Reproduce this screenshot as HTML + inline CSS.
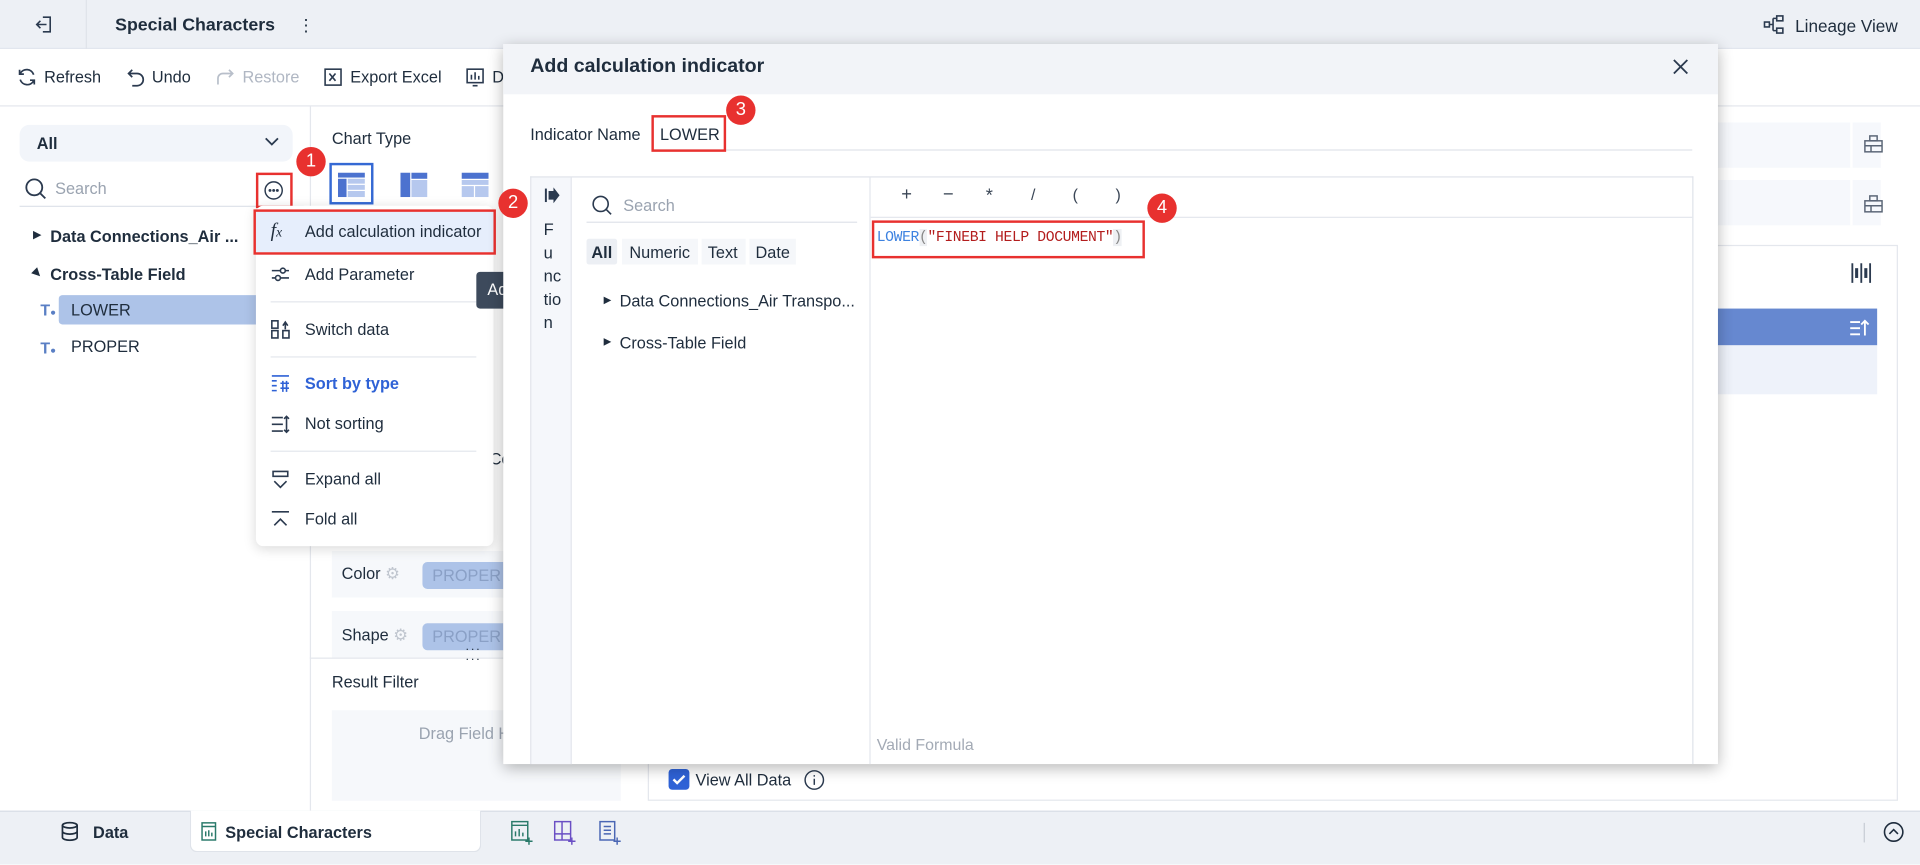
<!DOCTYPE html>
<html><head><meta charset="utf-8"><style>
*{box-sizing:border-box;margin:0;padding:0}
html,body{width:1920px;height:865px;overflow:hidden;background:#fff}
#s{position:absolute;left:0;top:0;width:1568px;height:706px;transform:scale(1.22449);transform-origin:0 0;font-family:"Liberation Sans",Arial,sans-serif;font-size:13.3px;color:#1f2d3d}
.a{position:absolute;white-space:nowrap}
.b{font-weight:bold}
.badge{position:absolute;width:24px;height:24px;border-radius:50%;background:#e8312f;color:#fff;font-size:15px;text-align:center;line-height:24px}
.red{position:absolute;border:2px solid #e8312f}
.t{transform:translateY(-50%)}
svg{position:absolute}
</style></head><body><div id="s">
<!-- top bar -->
<div class="a" style="left:0;top:0;width:1568px;height:40px;background:#edf0f5;border-bottom:1px solid #e2e6ee"></div>
<div class="a" style="left:70px;top:0;width:1px;height:40px;background:#dfe3ea"></div>
<svg style="left:28px;top:12px" width="16" height="16" viewBox="0 0 16 16" fill="none" stroke="#2b3a4f" stroke-width="1.3"><path d="M7 2h6v12H7M10 8H2M5 5L2 8l3 3"/></svg>
<div class="a b t" style="left:94px;top:21px;font-size:14.5px">Special Characters</div>
<div class="a t" style="left:243px;top:21px;font-size:14px">⋮</div>
<svg style="left:1440px;top:12px" width="18" height="16" viewBox="0 0 18 16" fill="none" stroke="#2b3a4f" stroke-width="1.3"><rect x="1" y="6" width="4" height="4"/><rect x="11" y="1" width="5" height="4"/><rect x="11" y="11" width="5" height="4"/><path d="M5 8h3M8 3v10M8 3h3M8 13h3"/></svg>
<div class="a t" style="left:1466px;top:21px;font-size:14px">Lineage View</div>
<!-- toolbar -->
<div class="a" style="left:0;top:86px;width:1568px;height:1px;background:#e4e7ed"></div>
<svg style="left:14px;top:55px" width="16" height="16" viewBox="0 0 16 16" fill="none" stroke="#2b3a4f" stroke-width="1.4"><path d="M13.5 6A6 6 0 0 0 2.5 5M2.5 10a6 6 0 0 0 11 1M2 2v3.5h3.5M14 14v-3.5h-3.5"/></svg>
<div class="a t" style="left:36px;top:63px">Refresh</div>
<svg style="left:103px;top:55px" width="16" height="16" viewBox="0 0 16 16" fill="none" stroke="#2b3a4f" stroke-width="1.4"><path d="M5 2L2 5l3 3M2 5h7a5 5 0 0 1 0 10H5"/></svg>
<div class="a t" style="left:124px;top:63px">Undo</div>
<svg style="left:176px;top:55px" width="16" height="16" viewBox="0 0 16 16" fill="none" stroke="#b8bfca" stroke-width="1.4"><path d="M11 2l3 3-3 3M14 5H6a4 4 0 0 0-4 4v5"/></svg>
<div class="a t" style="left:198px;top:63px;color:#b0b7c3">Restore</div>
<svg style="left:264px;top:55px" width="16" height="16" viewBox="0 0 16 16" fill="none" stroke="#2b3a4f" stroke-width="1.3"><rect x="1.5" y="1.5" width="13" height="13"/><path d="M5 5l5 6M10 5l-5 6"/></svg>
<div class="a t" style="left:286px;top:63px">Export Excel</div>
<svg style="left:380px;top:55px" width="16" height="16" viewBox="0 0 16 16" fill="none" stroke="#2b3a4f" stroke-width="1.3"><rect x="1.5" y="1.5" width="13" height="11"/><path d="M5 10V6M8 10V4M11 10V7M6 15h4"/></svg>
<div class="a t" style="left:402px;top:63px">D</div>
<!-- left panel -->
<div class="a" style="left:253px;top:87px;width:1px;height:575px;background:#e4e7ed"></div>
<div class="a" style="left:16px;top:102px;width:223px;height:30px;background:#f2f5fa;border-radius:8px"></div>
<div class="a b t" style="left:30px;top:117px">All</div>
<svg style="left:215px;top:111px" width="14" height="10" viewBox="0 0 14 10" fill="none" stroke="#2b3a4f" stroke-width="1.5"><path d="M2 2l5 5 5-5"/></svg>
<svg style="left:20px;top:145px" width="18" height="18" viewBox="0 0 18 18" fill="none" stroke="#2b3a4f" stroke-width="1.5"><circle cx="8" cy="8" r="6.5"/><path d="M13 13l4 4"/></svg>
<div class="a t" style="left:45px;top:154px;color:#9aa3b0">Search</div>
<div class="a" style="left:16px;top:168px;width:232px;height:1px;background:#dfe3ea"></div>
<svg style="left:215px;top:147px" width="17" height="17" viewBox="0 0 17 17" fill="none" stroke="#2b3a4f" stroke-width="1.2"><circle cx="8.5" cy="8.5" r="7"/><circle cx="5.5" cy="8.5" r=".6" fill="#2b3a4f"/><circle cx="8.5" cy="8.5" r=".6" fill="#2b3a4f"/><circle cx="11.5" cy="8.5" r=".6" fill="#2b3a4f"/></svg>
<div class="red" style="left:209px;top:141px;width:30px;height:29px"></div>
<div class="badge" style="left:242px;top:120px">1</div>
<div class="a t" style="left:27px;top:192px;font-size:9px">▶</div>
<div class="a b t" style="left:41px;top:193px">Data Connections_Air ...</div>
<div class="a t" style="left:27px;top:223px;font-size:9px;transform:translateY(-50%) rotate(45deg)">▶</div>
<div class="a b t" style="left:41px;top:224px">Cross-Table Field</div>
<div class="a" style="left:48px;top:241px;width:205px;height:24px;background:#adc3e8;border-radius:3px"></div>
<div class="a t" style="left:33px;top:253px;color:#5a7fc4;font-weight:bold;font-size:13px">T<span style="font-size:8px">●</span></div>
<div class="a t" style="left:58px;top:253px">LOWER</div>
<div class="a t" style="left:33px;top:284px;color:#5a7fc4;font-weight:bold;font-size:13px">T<span style="font-size:8px">●</span></div>
<div class="a t" style="left:58px;top:283px">PROPER</div>
<!-- chart type column -->
<div class="a t" style="left:271px;top:113px">Chart Type</div>
<div class="a" style="left:269px;top:133px;width:36px;height:34px;border:2px solid #3569d4"></div>
<svg style="left:276px;top:141px" width="22" height="20" viewBox="0 0 22 20"><rect x="0" y="0" width="22" height="4" fill="#4c72cf"/><rect x="0" y="5" width="7" height="15" fill="#4c72cf"/><rect x="8" y="5" width="14" height="4" fill="#b6c8ee"/><rect x="8" y="10" width="14" height="4" fill="#b6c8ee"/><rect x="8" y="15" width="14" height="5" fill="#b6c8ee"/></svg>
<svg style="left:327px;top:141px" width="22" height="20" viewBox="0 0 22 20"><rect x="0" y="0" width="8" height="20" fill="#4c72cf"/><rect x="9" y="0" width="13" height="5" fill="#4c72cf"/><rect x="9" y="6" width="13" height="14" fill="#b6c8ee"/></svg>
<svg style="left:377px;top:141px" width="22" height="20" viewBox="0 0 22 20"><rect x="0" y="0" width="22" height="5" fill="#4c72cf"/><rect x="0" y="6" width="22" height="4" fill="#b6c8ee"/><rect x="0" y="11" width="10" height="9" fill="#b6c8ee"/><rect x="11" y="11" width="11" height="9" fill="#b6c8ee"/></svg>
<div class="a t" style="left:400px;top:375px">Co</div>
<div class="a" style="left:271px;top:450px;width:140px;height:38px;background:#f6f8fb"></div>
<div class="a t" style="left:279px;top:469px">Color <span style="color:#c0c6cf">⚙</span></div>
<div class="a" style="left:345px;top:459px;width:66px;height:22px;background:#adc3e8;border-radius:4px 0 0 4px"></div>
<div class="a t" style="left:353px;top:470px;color:#8aa0c6">PROPER</div>
<div class="a" style="left:271px;top:499px;width:140px;height:38px;background:#f6f8fb"></div>
<div class="a t" style="left:279px;top:519px">Shape <span style="color:#c0c6cf">⚙</span></div>
<div class="a" style="left:345px;top:509px;width:66px;height:22px;background:#adc3e8;border-radius:4px 0 0 4px"></div>
<div class="a t" style="left:353px;top:520px;color:#8aa0c6">PROPER</div>
<div class="a" style="left:253px;top:537px;width:158px;height:1px;background:#e4e7ed"></div>
<div class="a" style="left:380px;top:527px;font-size:10px;line-height:8px;letter-spacing:1px">···<br>···</div>
<div class="a t" style="left:271px;top:557px">Result Filter</div>
<div class="a" style="left:271px;top:580px;width:236px;height:74px;background:#f6f8fb"></div>
<div class="a t" style="left:342px;top:599px;color:#9aa3b0">Drag Field H</div>
<!-- right background -->
<div class="a" style="left:1380px;top:100px;width:156px;height:37px;background:#f6f8fc"></div>
<div class="a" style="left:1511px;top:100px;width:2px;height:37px;background:#fff"></div>
<svg style="left:1522px;top:110px" width="16" height="15" viewBox="0 0 16 15" fill="none" stroke="#5a6576" stroke-width="1.2"><rect x="1" y="5" width="14" height="9"/><rect x="5" y="1" width="6" height="4"/><path d="M1 9h14M6 9v5"/></svg>
<div class="a" style="left:1380px;top:147px;width:156px;height:37px;background:#f6f8fc"></div>
<div class="a" style="left:1511px;top:147px;width:2px;height:37px;background:#fff"></div>
<svg style="left:1522px;top:159px" width="16" height="15" viewBox="0 0 16 15" fill="none" stroke="#5a6576" stroke-width="1.2"><rect x="1" y="5" width="14" height="9"/><rect x="5" y="1" width="6" height="4"/><path d="M1 9h14M6 9v5"/></svg>
<div class="a" style="left:529px;top:200px;width:1021px;height:454px;border:1px solid #e4e7ed"></div>
<svg style="left:1511px;top:214px" width="18" height="18" viewBox="0 0 18 18" fill="#2b3a4f"><rect x="1" y="1" width="1.5" height="16"/><rect x="15.5" y="1" width="1.5" height="16"/><rect x="8.3" y="1" width="1.5" height="16"/><rect x="4" y="5" width="2.5" height="8"/><rect x="11.5" y="5" width="2.5" height="8"/></svg>
<div class="a" style="left:1380px;top:252px;width:153px;height:30px;background:#6688d0"></div>
<svg style="left:1510px;top:260px" width="18" height="16" viewBox="0 0 18 16" fill="none" stroke="#fff" stroke-width="1.5"><path d="M1 3h8M1 8h8M1 13h8M13 14V2M10 5l3-3 3 3"/></svg>
<div class="a" style="left:1380px;top:282px;width:153px;height:40px;background:#eef2fa"></div>
<div class="a" style="left:546px;top:628px;width:17px;height:17px;background:#2f62d6;border-radius:3px"></div>
<svg style="left:548px;top:630px" width="13" height="13" viewBox="0 0 13 13" fill="none" stroke="#fff" stroke-width="2"><path d="M2 6.5l3 3 6-6"/></svg>
<div class="a t" style="left:568px;top:637px">View All Data</div>
<svg style="left:656px;top:628px" width="18" height="18" viewBox="0 0 18 18" fill="none" stroke="#2b3a4f" stroke-width="1.2"><circle cx="9" cy="9" r="7.5"/><path d="M9 8v5M9 5v1.2"/></svg>
<!-- bottom bar -->
<div class="a" style="left:0;top:662px;width:1568px;height:44px;background:#edf0f5;border-top:1px solid #d8dde6"></div>
<svg style="left:50px;top:671px" width="14" height="16" viewBox="0 0 14 16" fill="none" stroke="#1f2d3d" stroke-width="1.4"><ellipse cx="7" cy="3" rx="6" ry="2.2"/><path d="M1 3v10c0 1.2 2.7 2.2 6 2.2s6-1 6-2.2V3M1 8c0 1.2 2.7 2.2 6 2.2S13 9.2 13 8"/></svg>
<div class="a b t" style="left:76px;top:680px">Data</div>
<div class="a" style="left:155px;top:662px;width:238px;height:34px;background:#fff;border-radius:0 0 6px 6px;border:1px solid #dfe3ea;border-top:none"></div>
<svg style="left:164px;top:671px" width="13" height="16" viewBox="0 0 13 16" fill="none" stroke="#2a7a6a" stroke-width="1.2"><rect x="1" y="1" width="11" height="14"/><path d="M1 4h11M4 12V8M6.5 12V7M9 12V9"/></svg>
<div class="a b t" style="left:184px;top:680px">Special Characters</div>
<svg style="left:417px;top:670px" width="18" height="20" viewBox="0 0 18 20" fill="none" stroke="#2a7a6a" stroke-width="1.2"><rect x="1" y="1" width="13" height="15"/><path d="M1 4h13M4 13V9M7 13V7M10 13V10M12 17h6M15 14v6"/></svg>
<svg style="left:452px;top:670px" width="18" height="20" viewBox="0 0 18 20" fill="none" stroke="#6a4fc4" stroke-width="1.2"><rect x="1" y="1" width="13" height="15"/><path d="M1 11h13M7 1v15M12 17h6M15 14v6"/></svg>
<svg style="left:489px;top:670px" width="18" height="20" viewBox="0 0 18 20" fill="none" stroke="#4a66b4" stroke-width="1.2"><rect x="1" y="1" width="12" height="15"/><path d="M4 5h6M4 8h6M4 11h6M12 17h6M15 14v6"/></svg>
<div class="a" style="left:1522px;top:672px;width:1px;height:16px;background:#c7ccd5"></div>
<svg style="left:1538px;top:671px" width="17" height="17" viewBox="0 0 17 17" fill="none" stroke="#1f2d3d" stroke-width="1.3"><circle cx="8.5" cy="8.5" r="7.5"/><path d="M5 10l3.5-3.5L12 10"/></svg>
<!-- context menu -->
<div class="a" style="left:209px;top:168px;width:194px;height:278px;background:#fff;border-radius:6px;box-shadow:0 2px 10px rgba(0,0,0,.15)"></div>
<div class="a" style="left:209px;top:172px;width:196px;height:34px;background:#e6eefc"></div>
<div class="a t" style="left:221px;top:189px;font-family:'Liberation Serif',serif;font-style:italic;font-size:16px">f<span style="font-size:11px">x</span></div>
<div class="a t" style="left:249px;top:189px">Add calculation indicator</div>
<div class="red" style="left:207px;top:171px;width:198px;height:37px"></div>
<svg style="left:221px;top:217px" width="16" height="14" viewBox="0 0 16 14" fill="none" stroke="#2b3a4f" stroke-width="1.3"><path d="M1 4h14M1 10h14"/><circle cx="10" cy="4" r="2" fill="#fff"/><circle cx="6" cy="10" r="2" fill="#fff"/></svg>
<div class="a t" style="left:249px;top:224px">Add Parameter</div>
<div class="a" style="left:221px;top:246px;width:168px;height:1px;background:#e4e7ed"></div>
<svg style="left:221px;top:261px" width="16" height="16" viewBox="0 0 16 16" fill="none" stroke="#2b3a4f" stroke-width="1.3"><rect x="1" y="1" width="5" height="6"/><rect x="1" y="9" width="5" height="6"/><rect x="10" y="9" width="5" height="6"/><path d="M10 5l2-3 2 3M12 2v6"/></svg>
<div class="a t" style="left:249px;top:269px">Switch data</div>
<div class="a" style="left:221px;top:291px;width:168px;height:1px;background:#e4e7ed"></div>
<svg style="left:221px;top:306px" width="16" height="15" viewBox="0 0 16 15" fill="none" stroke="#2f62d6" stroke-width="1.3"><path d="M1 1h14M1 5h4M1 9h4M1 13h4M8 7h7M8 11h7M10 5v9M13 5v9"/></svg>
<div class="a b t" style="left:249px;top:313px;color:#2f62d6">Sort by type</div>
<svg style="left:221px;top:339px" width="16" height="15" viewBox="0 0 16 15" fill="none" stroke="#2b3a4f" stroke-width="1.3"><path d="M1 2h9M1 7.5h9M1 13h9M13 1v13M11 3l2-2 2 2M11 12l2 2 2-2"/></svg>
<div class="a t" style="left:249px;top:346px">Not sorting</div>
<div class="a" style="left:221px;top:368px;width:168px;height:1px;background:#e4e7ed"></div>
<svg style="left:221px;top:384px" width="16" height="16" viewBox="0 0 16 16" fill="none" stroke="#2b3a4f" stroke-width="1.3"><path d="M2 1h12v4H2zM3 9l5 5 5-5"/></svg>
<div class="a t" style="left:249px;top:391px">Expand all</div>
<svg style="left:221px;top:417px" width="16" height="14" viewBox="0 0 16 14" fill="none" stroke="#2b3a4f" stroke-width="1.3"><path d="M1 1h14M3 12l5-5 5 5"/></svg>
<div class="a t" style="left:249px;top:424px">Fold all</div>
<div class="a" style="left:389px;top:222px;width:24px;height:30px;background:#3d4a5c;border-radius:3px 0 0 3px;color:#fff;line-height:30px;padding-left:9px;overflow:hidden">Ad</div>
<!-- dialog -->
<div class="a" style="left:411px;top:36px;width:992px;height:588px;background:#fff;box-shadow:0 3px 12px rgba(0,0,0,.3)"></div>
<div class="a" style="left:411px;top:36px;width:992px;height:41px;background:#f2f4f8"></div>
<div class="a b t" style="left:433px;top:55px;font-size:16px">Add calculation indicator</div>
<svg style="left:1366px;top:48px" width="13" height="13" viewBox="0 0 13 13" fill="none" stroke="#2b3a4f" stroke-width="1.5"><path d="M1 1l11 11M12 1L1 12"/></svg>
<div class="a t" style="left:433px;top:110px">Indicator Name</div>
<div class="a t" style="left:539px;top:110px">LOWER</div>
<div class="a" style="left:532px;top:122px;width:850px;height:1px;background:#dfe3ea"></div>
<div class="red" style="left:532px;top:94px;width:61px;height:30px"></div>
<div class="badge" style="left:593px;top:78px">3</div>
<div class="a" style="left:433px;top:144px;width:950px;height:480px;border:1px solid #dfe3ea;border-bottom:none"></div>
<div class="a" style="left:434px;top:145px;width:33px;height:479px;background:#f5f7fb;border-right:1px solid #e4e7ed"></div>
<svg style="left:444px;top:153px" width="14" height="13" viewBox="0 0 14 13" fill="#2b3a4f"><rect x="1" y="1" width="1.6" height="11"/><path d="M4 3h4V0l5 6.5-5 6.5V10H4z"/></svg>
<div class="a" style="left:444px;top:178px;line-height:19px;font-size:13.5px;white-space:normal;width:20px">F<br>u<br>nc<br>tio<br>n</div>
<div class="a" style="left:710px;top:145px;width:1px;height:479px;background:#e4e7ed"></div>
<svg style="left:483px;top:159px" width="17" height="17" viewBox="0 0 18 18" fill="none" stroke="#2b3a4f" stroke-width="1.4"><circle cx="8" cy="8" r="6.5"/><path d="M13 13l4 4"/></svg>
<div class="a t" style="left:509px;top:168px;color:#9aa3b0">Search</div>
<div class="a" style="left:479px;top:181px;width:221px;height:1px;background:#dfe3ea"></div>
<div class="a" style="left:479px;top:195px;width:25px;height:21px;background:#eceff4;border-radius:2px"></div>
<div class="a b t" style="left:483px;top:206px">All</div>
<div class="a" style="left:508px;top:195px;width:62px;height:21px;background:#f5f7fa"></div>
<div class="a t" style="left:514px;top:206px">Numeric</div>
<div class="a" style="left:573px;top:195px;width:36px;height:21px;background:#f5f7fa"></div>
<div class="a t" style="left:578px;top:206px">Text</div>
<div class="a" style="left:612px;top:195px;width:38px;height:21px;background:#f5f7fa"></div>
<div class="a t" style="left:617px;top:206px">Date</div>
<div class="a t" style="left:493px;top:245px;font-size:8px">▶</div>
<div class="a t" style="left:506px;top:246px">Data Connections_Air Transpo...</div>
<div class="a t" style="left:493px;top:279px;font-size:8px">▶</div>
<div class="a t" style="left:506px;top:280px">Cross-Table Field</div>
<div class="a t" style="left:736px;top:159px;font-size:15px;color:#3a4656">+</div>
<div class="a t" style="left:770px;top:159px;font-size:15px;color:#3a4656">−</div>
<div class="a t" style="left:805px;top:160px;font-size:15px;color:#3a4656">*</div>
<div class="a t" style="left:842px;top:159px;font-size:13px;color:#3a4656">/</div>
<div class="a t" style="left:876px;top:159px;font-size:13px;color:#3a4656">(</div>
<div class="a t" style="left:911px;top:159px;font-size:13px;color:#3a4656">)</div>
<div class="a" style="left:711px;top:177px;width:671px;height:1px;background:#e4e7ed"></div>
<div class="a t" style="left:716px;top:194px;font-family:'Liberation Mono',monospace;font-size:12px;letter-spacing:-.3px"><span style="color:#3d82e0">LOWER</span><span style="color:#888;background:#eef0f3">(</span><span style="color:#b31d1d">"FINEBI HELP DOCUMENT"</span><span style="color:#888;background:#eef0f3">)</span></div>
<div class="red" style="left:712px;top:180px;width:223px;height:31px"></div>
<div class="badge" style="left:937px;top:158px">4</div>
<div class="a t" style="left:716px;top:608px;color:#a3aab5;font-size:13px">Valid Formula</div>
<div class="badge" style="left:407px;top:154px">2</div>
</div></body></html>
